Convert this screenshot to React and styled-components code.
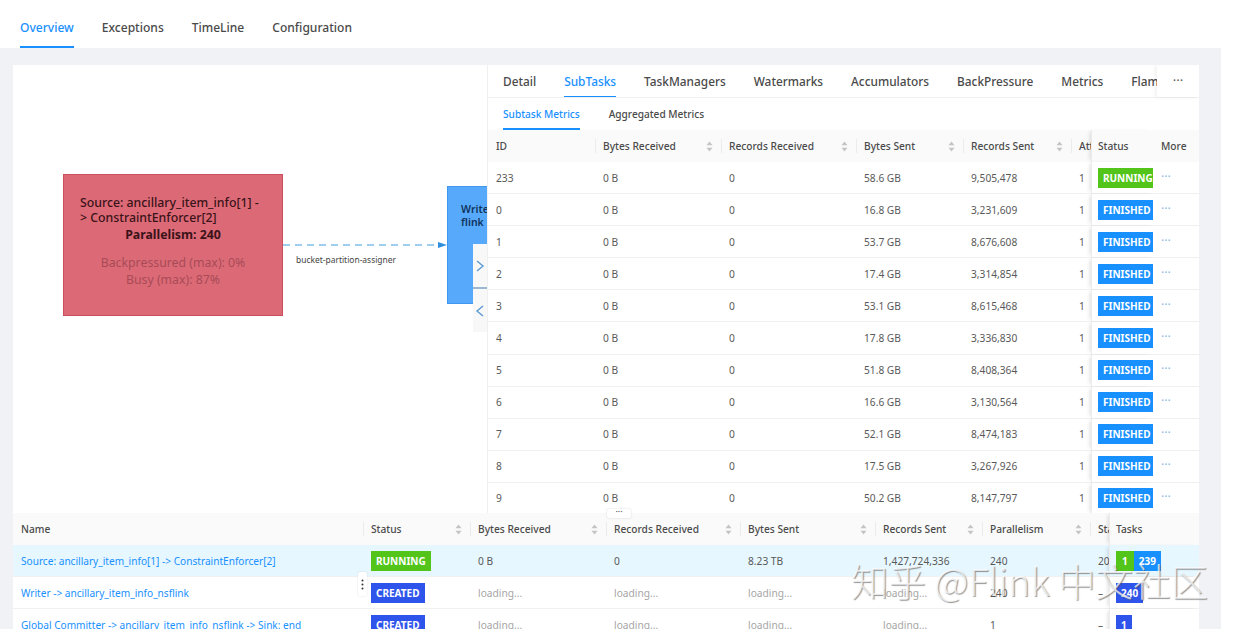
import React from "react"
import styled, { createGlobalStyle } from "styled-components"

const GlobalStyle = createGlobalStyle`
  html, body { margin: 0; padding: 0; background: #fff; }
  body { font-family: "Noto Sans", "Open Sans", sans-serif; color: #595959; overflow: hidden; }
`

const Page = styled.div`
  width: 1240px;
  height: 629px;
  overflow: hidden;
  position: relative;
  display: flex;
  flex-direction: column;
`

const TopTabs = styled.div`
  height: 48px;
  flex: none;
  display: flex;
  gap: 28px;
  padding-left: 20px;
  box-sizing: border-box;
`

const TopTab = styled.div`
  height: 48px;
  line-height: 56px;
  box-sizing: border-box;
  font-size: 12.05px;
  font-weight: 500;
  white-space: nowrap;
  color: ${(p) => (p.$active ? "#1890ff" : "#4a4a4a")};
  border-bottom: 2px solid ${(p) => (p.$active ? "#1890ff" : "transparent")};
`

const Body = styled.div`
  width: 1221px;
  flex: 1;
  min-height: 0;
  background: #f0f2f5;
  padding: 17px 22px 0 13px;
  box-sizing: border-box;
`

const Panel = styled.div`
  background: #fff;
  display: flex;
  flex-direction: column;
  position: relative;
`

const TopArea = styled.div`
  height: 448px;
  display: flex;
`

const Canvas = styled.div`
  width: 474px;
  flex: none;
  position: relative;
  overflow: hidden;
`

const SourceNode = styled.div`
  position: absolute;
  left: 50px;
  top: 109px;
  width: 220px;
  height: 142px;
  box-sizing: border-box;
  background: #dc6a76;
  border: 1px solid #c9505c;
  padding-top: 20px;
  font-size: 12.3px;
  line-height: 15px;
  color: #3a1219;
  font-weight: 500;
`

const NodeName = styled.div`
  padding: 0 16px;
  white-space: nowrap;
`

const NodeParallel = styled.div`
  text-align: center;
  font-weight: 700;
  margin-top: 2px;
`

const NodeStats = styled.div`
  text-align: center;
  font-weight: 400;
  line-height: 17px;
  color: #a84b57;
  margin-top: 12px;
`

const WriterNode = styled.div`
  position: absolute;
  left: 434px;
  top: 121px;
  width: 70px;
  height: 118px;
  box-sizing: border-box;
  background: #57a9fb;
  border: 1px solid #3f97ee;
  padding: 16px 0 0 13px;
  font-size: 10.5px;
  line-height: 12.5px;
  font-weight: 600;
  color: #10345c;
`

const Edge = styled.svg`
  position: absolute;
  left: 270px;
  top: 172px;
`

const EdgeLabel = styled.div`
  position: absolute;
  left: 283px;
  top: 188px;
  font-size: 8.45px;
  line-height: 14px;
  color: #444;
  white-space: nowrap;
`

const Controls = styled.div`
  position: absolute;
  left: 460px;
  top: 179px;
  width: 14px;
  height: 88px;
  background: #f8f8f8;
  display: flex;
  flex-direction: column;
`

const ControlBtn = styled.div`
  flex: 1;
  display: flex;
  align-items: center;
  justify-content: center;
  & + & { border-top: 2px solid #9db8d2; }
`

const Drawer = styled.div`
  width: 712px;
  flex: none;
  overflow: hidden;
  background: #fff;
  display: flex;
  flex-direction: column;
  position: relative;
  border-left: 1px solid #f0f0f0;
  box-sizing: border-box;
`

const DrawerTabs = styled.div`
  height: 33px;
  flex: none;
  display: flex;
  gap: 28px;
  padding-left: 15px;
  border-bottom: 1px solid #f0f0f0;
  overflow: hidden;
  box-sizing: border-box;
`

const DrawerTab = styled.div`
  height: 33px;
  line-height: 32px;
  box-sizing: border-box;
  font-size: 11.85px;
  font-weight: 500;
  white-space: nowrap;
  color: ${(p) => (p.$active ? "#1890ff" : "#4a4a4a")};
  border-bottom: 2px solid ${(p) => (p.$active ? "#1890ff" : "transparent")};
`

const TabMore = styled.div`
  position: absolute;
  right: 0;
  top: 0;
  width: 42px;
  height: 32px;
  background: #fff;
  box-shadow: -2px 0 4px rgba(0, 0, 0, 0.06);
  text-align: center;
  line-height: 30px;
  font-size: 13px;
  color: #595959;
`

const SubTabs = styled.div`
  height: 32px;
  flex: none;
  display: flex;
  gap: 29px;
  padding-left: 15px;
  box-sizing: border-box;
`

const SubTab = styled.div`
  height: 32px;
  line-height: 33px;
  box-sizing: border-box;
  font-size: 10.1px;
  font-weight: 500;
  white-space: nowrap;
  color: ${(p) => (p.$active ? "#1890ff" : "#4a4a4a")};
  border-bottom: 2px solid ${(p) => (p.$active ? "#1890ff" : "transparent")};
`

const Row = styled.div`
  display: grid;
  grid-template-columns: ${(p) => p.$cols};
  height: ${(p) => p.$height}px;
  box-sizing: border-box;
  flex: none;
  font-size: 10.2px;
  align-items: stretch;
  background: ${(p) => (p.$selected ? "#e6f7ff" : "#fff")};
  border-bottom: 1px solid #f0f0f0;
`

const HeadRow = styled(Row)`
  background: #fafafa;
  color: #4a4a4a;
  font-weight: 500;
  border-bottom: none;
`

const Cell = styled.div`
  display: flex;
  align-items: center;
  padding-left: 8px;
  white-space: nowrap;
  overflow: hidden;
  min-width: 0;
  color: ${(p) => (p.$muted ? "#a6a6a6" : "#595959")};
`

const HeadCell = styled(Cell)`
  justify-content: space-between;
  padding-right: 8px;
  color: #4a4a4a;
  position: relative;
  &::before {
    content: "";
    display: ${(p) => (p.$first ? "none" : "block")};
    position: absolute;
    left: 0;
    top: 9px;
    bottom: 9px;
    width: 1px;
    background: #ececec;
  }
`

const FixedCell = styled(Cell)`
  background: inherit;
  padding-left: ${(p) => (p.$edge ? 6 : 8)}px;
  box-shadow: ${(p) => (p.$edge ? "-3px 0 4px -2px rgba(0, 0, 0, 0.14)" : "none")};
  border-left: ${(p) => (p.$edge ? "1px solid #ececec" : "none")};
  overflow: visible;
`

const HeadFixed = styled(FixedCell)`
  color: #4a4a4a;
`

const NameLink = styled.span`
  color: #1890ff;
  font-size: 10.1px;
`

const Tag = styled.span`
  display: inline-block;
  flex: none;
  height: 20px;
  line-height: 20px;
  padding: 0 ${(p) => p.$pad ?? 5}px;
  color: #fff;
  font-weight: 700;
  font-size: 10px;
  background: ${(p) => p.$color};
`

const TagBox = styled.div`
  width: 56px;
  height: 20px;
  overflow: hidden;
  flex: none;
  display: flex;
`

const MoreDots = styled.span`
  color: #8fb8e0;
  font-size: 12px;
  padding-bottom: 3px;
`

const TaskBar = styled.div`
  display: flex;
`

const BottomTable = styled.div`
  position: relative;
  display: flex;
  flex-direction: column;
  height: 120px;
  overflow: hidden;
`

const ResizeDots = styled.div`
  position: absolute;
  left: 594px;
  top: 444px;
  width: 24px;
  height: 9px;
  background: #fff;
  border-radius: 2px;
  box-shadow: 0 0 2px rgba(0, 0, 0, 0.18);
  text-align: center;
  font-size: 9px;
  line-height: 5px;
  color: #555;
  z-index: 2;
`

const ResizeSide = styled.div`
  position: absolute;
  left: 345px;
  top: 507px;
  width: 9px;
  height: 24px;
  background: #fff;
  border-radius: 2px;
  box-shadow: 0 0 2px rgba(0, 0, 0, 0.14);
  display: flex;
  align-items: center;
  justify-content: center;
  z-index: 2;
`

const Watermark = styled.div`
  position: absolute;
  left: 851px;
  top: 556px;
  font-family: "Noto Sans CJK SC", "Noto Sans", sans-serif;
  font-size: 37.5px;
  line-height: 48px;
  font-weight: 300;
  white-space: nowrap;
  color: rgba(255, 255, 255, 0.72);
  text-shadow: 1px 1px 1px rgba(80, 80, 80, 0.6);
  z-index: 5;
`

const SortIcon = () => (
  <svg width="7" height="11" viewBox="0 0 7 11" style={{ flex: "none" }}>
    <path d="M3.5 0.5 L6.5 4.3 H0.5 Z" fill="#c4c4c4" />
    <path d="M3.5 10.5 L6.5 6.7 H0.5 Z" fill="#c4c4c4" />
  </svg>
)

const Chevron = ({ dir }) => (
  <svg width="10" height="12" viewBox="0 0 10 12">
    <path
      d={dir === "right" ? "M2 1 L8 6 L2 11" : "M8 1 L2 6 L8 11"}
      fill="none"
      stroke="#5b9bd5"
      strokeWidth="1.4"
    />
  </svg>
)

const subCols = "107px 126px 135px 107px 108px 20px 62px 46px"
const jobCols = "350px 107px 136px 134px 135px 107px 108px 19px 90px"

const subtasks = [
  ["233", "58.6 GB", "9,505,478"],
  ["0", "16.8 GB", "3,231,609"],
  ["1", "53.7 GB", "8,676,608"],
  ["2", "17.4 GB", "3,314,854"],
  ["3", "53.1 GB", "8,615,468"],
  ["4", "17.8 GB", "3,336,830"],
  ["5", "51.8 GB", "8,408,364"],
  ["6", "16.6 GB", "3,130,564"],
  ["7", "52.1 GB", "8,474,183"],
  ["8", "17.5 GB", "3,267,926"],
  ["9", "50.2 GB", "8,147,797"],
]

const jobs = [
  {
    name: "Source: ancillary_item_info[1] -> ConstraintEnforcer[2]",
    status: "RUNNING",
    selected: true,
    bytesIn: "0 B",
    recIn: "0",
    bytesOut: "8.23 TB",
    recOut: "1,427,724,336",
    parallel: "240",
    start: "20",
  },
  { name: "Writer -> ancillary_item_info_nsflink", status: "CREATED", parallel: "240", start: "–" },
  { name: "Global Committer -> ancillary_item_info_nsflink -> Sink: end", status: "CREATED", parallel: "1", start: "–" },
]

const App = () => {
  return (
    <Page>
      <GlobalStyle />
      <TopTabs>
        <TopTab $active>Overview</TopTab>
        <TopTab>Exceptions</TopTab>
        <TopTab>TimeLine</TopTab>
        <TopTab>Configuration</TopTab>
      </TopTabs>
      <Body>
        <Panel>
          <TopArea>
            <Canvas>
              <SourceNode>
                <NodeName>
                  Source: ancillary_item_info[1] -
                  <br />
                  &gt; ConstraintEnforcer[2]
                </NodeName>
                <NodeParallel>Parallelism: 240</NodeParallel>
                <NodeStats>
                  Backpressured (max): 0%
                  <br />
                  Busy (max): 87%
                </NodeStats>
              </SourceNode>
              <Edge width="164" height="16" viewBox="0 0 164 16">
                <line x1="0" y1="8" x2="156" y2="8" stroke="#3d9be0" strokeWidth="1" strokeDasharray="7 5" />
                <path d="M155 5 L164 8 L155 11 Z" fill="#2f8fdd" />
              </Edge>
              <EdgeLabel>bucket-partition-assigner</EdgeLabel>
              <WriterNode>
                Writer -&gt;
                <br />
                flink
              </WriterNode>
              <Controls>
                <ControlBtn>
                  <Chevron dir="right" />
                </ControlBtn>
                <ControlBtn>
                  <Chevron dir="left" />
                </ControlBtn>
              </Controls>
            </Canvas>
            <Drawer>
              <DrawerTabs>
                <DrawerTab>Detail</DrawerTab>
                <DrawerTab $active>SubTasks</DrawerTab>
                <DrawerTab>TaskManagers</DrawerTab>
                <DrawerTab>Watermarks</DrawerTab>
                <DrawerTab>Accumulators</DrawerTab>
                <DrawerTab>BackPressure</DrawerTab>
                <DrawerTab>Metrics</DrawerTab>
                <DrawerTab>FlameGraph</DrawerTab>
              </DrawerTabs>
              <TabMore>···</TabMore>
              <SubTabs>
                <SubTab $active>Subtask Metrics</SubTab>
                <SubTab>Aggregated Metrics</SubTab>
              </SubTabs>
              <HeadRow $cols={subCols} $height={32}>
                <HeadCell $first>ID</HeadCell>
                <HeadCell>
                  Bytes Received
                  <SortIcon />
                </HeadCell>
                <HeadCell>
                  Records Received
                  <SortIcon />
                </HeadCell>
                <HeadCell>
                  Bytes Sent
                  <SortIcon />
                </HeadCell>
                <HeadCell>
                  Records Sent
                  <SortIcon />
                </HeadCell>
                <HeadCell>Attempt</HeadCell>
                <HeadFixed $edge>Status</HeadFixed>
                <HeadFixed>More</HeadFixed>
              </HeadRow>
              {subtasks.map(([id, sent, records]) => (
                <Row key={id} $cols={subCols} $height={32.1}>
                  <Cell>{id}</Cell>
                  <Cell>0 B</Cell>
                  <Cell>0</Cell>
                  <Cell>{sent}</Cell>
                  <Cell>{records}</Cell>
                  <Cell>1</Cell>
                  <FixedCell $edge>
                    <TagBox>
                      <Tag $color={id === "233" ? "#52c41a" : "#1890ff"}>
                        {id === "233" ? "RUNNING" : "FINISHED"}
                      </Tag>
                    </TagBox>
                  </FixedCell>
                  <FixedCell>
                    <MoreDots>···</MoreDots>
                  </FixedCell>
                </Row>
              ))}
            </Drawer>
          </TopArea>
          <ResizeDots>···</ResizeDots>
          <ResizeSide>
            <svg width="3" height="11" viewBox="0 0 3 11">
              <circle cx="1.5" cy="1.5" r="1" fill="#333" />
              <circle cx="1.5" cy="5.5" r="1" fill="#333" />
              <circle cx="1.5" cy="9.5" r="1" fill="#333" />
            </svg>
          </ResizeSide>
          <BottomTable>
            <HeadRow $cols={jobCols} $height={32}>
              <HeadCell $first>Name</HeadCell>
              <HeadCell>
                Status
                <SortIcon />
              </HeadCell>
              <HeadCell>
                Bytes Received
                <SortIcon />
              </HeadCell>
              <HeadCell>
                Records Received
                <SortIcon />
              </HeadCell>
              <HeadCell>
                Bytes Sent
                <SortIcon />
              </HeadCell>
              <HeadCell>
                Records Sent
                <SortIcon />
              </HeadCell>
              <HeadCell>
                Parallelism
                <SortIcon />
              </HeadCell>
              <HeadCell>Start Time</HeadCell>
              <HeadFixed $edge>Tasks</HeadFixed>
            </HeadRow>
            {jobs.map((job) => (
              <Row key={job.name} $cols={jobCols} $height={32} $selected={job.selected}>
                <Cell>
                  <NameLink>{job.name}</NameLink>
                </Cell>
                <Cell>
                  <Tag $color={job.status === "RUNNING" ? "#52c41a" : "#2f54eb"}>{job.status}</Tag>
                </Cell>
                <Cell $muted={!job.bytesIn}>{job.bytesIn || "loading..."}</Cell>
                <Cell $muted={!job.recIn}>{job.recIn || "loading..."}</Cell>
                <Cell $muted={!job.bytesOut}>{job.bytesOut || "loading..."}</Cell>
                <Cell $muted={!job.recOut}>{job.recOut || "loading..."}</Cell>
                <Cell>{job.parallel}</Cell>
                <Cell>{job.start}</Cell>
                <FixedCell $edge>
                  {job.status === "RUNNING" ? (
                    <TaskBar>
                      <Tag $color="#52c41a" $pad={6}>1</Tag>
                      <Tag $color="#1890ff" $pad={5}>239</Tag>
                    </TaskBar>
                  ) : (
                    <Tag $color="#2f54eb" $pad={5}>{job.parallel}</Tag>
                  )}
                </FixedCell>
              </Row>
            ))}
          </BottomTable>
        </Panel>
      </Body>
      <Watermark>知乎 @Flink 中文社区</Watermark>
    </Page>
  )
}

export default App
